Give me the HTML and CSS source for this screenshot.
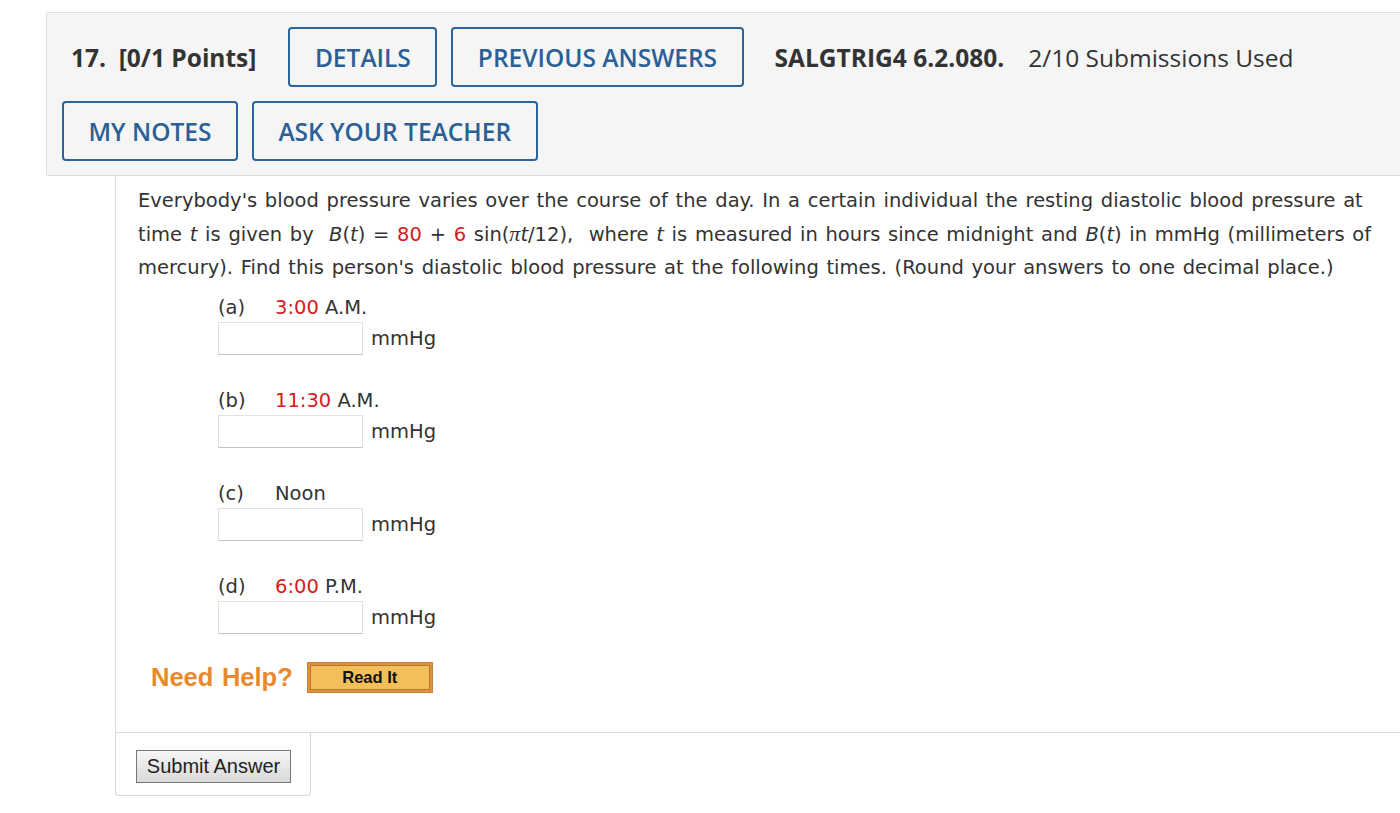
FILE: index.html
```html
<!DOCTYPE html>
<html>
<head>
<meta charset="utf-8">
<link rel="stylesheet" href="styles.css">
</head>
<body>
<div class="page">
  <div class="q-header">
    <div class="q-row">
      <span class="q-points">17.&nbsp; [0/1 Points]</span>
      <button class="q-btn">DETAILS</button>
      <button class="q-btn">PREVIOUS ANSWERS</button>
      <span class="q-code">SALGTRIG4 6.2.080.</span>
      <span class="q-subs">2/10 Submissions Used</span>
    </div>
    <div class="q-row">
      <button class="q-btn">MY NOTES</button>
      <button class="q-btn">ASK YOUR TEACHER</button>
    </div>
  </div>
  <div class="q-body">
    <p class="q-text">Everybody's blood pressure varies over the course of the day. In a certain individual the resting diastolic blood pressure at time <i>t</i> is given by&nbsp; <span class="math"><i>B</i>(<i>t</i>) = <span class="red">80</span> + <span class="red">6</span> sin(<i class="pi">&pi;</i><i>t</i>/12),</span>&nbsp; where <i>t</i> is measured in hours since midnight and <i>B</i>(<i>t</i>) in mmHg (millimeters of mercury). Find this person's diastolic blood pressure at the following times. (Round your answers to one decimal place.)</p>
    <div class="parts">
      <div class="part">
        <div class="part-label"><span class="letter">(a)</span><span class="red">3:00</span> A.M.</div>
        <div class="part-row"><input class="answer" type="text"><span class="unit">mmHg</span></div>
      </div>
      <div class="part">
        <div class="part-label"><span class="letter">(b)</span><span class="red">11:30</span> A.M.</div>
        <div class="part-row"><input class="answer" type="text"><span class="unit">mmHg</span></div>
      </div>
      <div class="part">
        <div class="part-label"><span class="letter">(c)</span>Noon</div>
        <div class="part-row"><input class="answer" type="text"><span class="unit">mmHg</span></div>
      </div>
      <div class="part">
        <div class="part-label"><span class="letter">(d)</span><span class="red">6:00</span> P.M.</div>
        <div class="part-row"><input class="answer" type="text"><span class="unit">mmHg</span></div>
      </div>
    </div>
    <div class="help">
      <span class="help-title">Need Help?</span>
      <button class="read-it"><span>Read It</span></button>
    </div>
  </div>
  <div class="submit-box">
    <button class="submit-btn">Submit Answer</button>
  </div>
</div>
</body>
</html>
```
FILE: styles.css
```css
html, body {
  margin: 0;
  padding: 0;
  overflow: hidden;
  background: #ffffff;
}

.page {
  width: 1500px;
  padding-top: 12px;
}

.q-header {
  margin-left: 46px;
  width: 1440px;
  box-sizing: border-box;
  background: #f5f5f5;
  border: 1px solid #dedede;
  border-radius: 3px;
  padding: 14px 15px;
  display: flex;
  flex-direction: column;
  gap: 14px;
  font-family: "Open Sans", sans-serif;
  font-size: 24.5px;
  color: #333333;
}

.q-row {
  display: flex;
  align-items: center;
  gap: 14px;
}

.q-points {
  font-weight: 700;
  margin-left: 9px;
  margin-right: 18px;
}

.q-btn {
  font-family: "Open Sans", sans-serif;
  font-size: 24.5px;
  font-weight: 600;
  color: #2a6095;
  background: #f5f5f5;
  border: 2px solid #2d6499;
  border-radius: 4px;
  height: 60px;
  padding: 0 24.5px;
  margin: 0;
}

.q-code {
  font-weight: 700;
  margin-left: 17px;
  margin-right: 10px;
}

.q-subs {
  font-weight: 400;
}

.q-body {
  margin-left: 115px;
  border-left: 1px solid #dedede;
  border-bottom: 1px solid #dedede;
  padding: 8px 0 38px 22px;
  font-family: "DejaVu Sans", Verdana, sans-serif;
  font-size: 19.5px;
  word-spacing: 1.5px;
  color: #333333;
}

.q-text {
  margin: 0;
  width: 1255px;
  line-height: 33px;
}

.pi {
  font-family: "Liberation Serif", serif;
  font-size: 22px;
}

.red {
  color: #d2201c;
}

.parts {
  margin: 10px 0 0 80px;
}

.part {
  margin-bottom: 32px;
}

.part:last-child {
  margin-bottom: 26px;
}

.part-label {
  line-height: 28px;
  height: 28px;
  word-spacing: 0;
}

.letter {
  display: inline-block;
  width: 57px;
}

.part-row {
  display: flex;
  align-items: center;
  gap: 8px;
}

.answer {
  width: 145px;
  height: 33px;
  box-sizing: border-box;
  margin: 0;
  border: 1px solid #e2e2e2;
  border-bottom: 1px solid #c4c4c4;
  background: #ffffff;
}

.unit {
  line-height: 33px;
}

.help {
  display: flex;
  align-items: center;
  gap: 14px;
  margin-left: 13px;
  height: 34px;
}

.help-title {
  font-family: "Liberation Sans", Arial, sans-serif;
  font-weight: 700;
  font-size: 25.5px;
  color: #e8892e;
}

.read-it {
  width: 126px;
  height: 31px;
  margin: 0;
  padding: 2px;
  background: #e0923b;
  border: 1px solid #c9803a;
  box-sizing: border-box;
}

.read-it span {
  display: block;
  height: 100%;
  box-sizing: border-box;
  border: 1px solid #b9742e;
  background: #f3bf5a;
  font-family: "Liberation Sans", Arial, sans-serif;
  font-weight: 700;
  font-size: 16.5px;
  line-height: 23px;
  color: #111111;
}

.submit-box {
  margin-left: 115px;
  width: 196px;
  box-sizing: border-box;
  border: 1px solid #d6d6d6;
  border-top: none;
  border-radius: 0 0 4px 4px;
  padding: 17px 20px 12px 20px;
}

.submit-btn {
  width: 155px;
  height: 33px;
  margin: 0;
  font-family: "Liberation Sans", Arial, sans-serif;
  font-size: 20px;
  color: #222222;
  background: linear-gradient(#f6f6f6, #d9d9d9);
  border: 1px solid #777777;
  border-radius: 0;
  padding: 0;
}
```
